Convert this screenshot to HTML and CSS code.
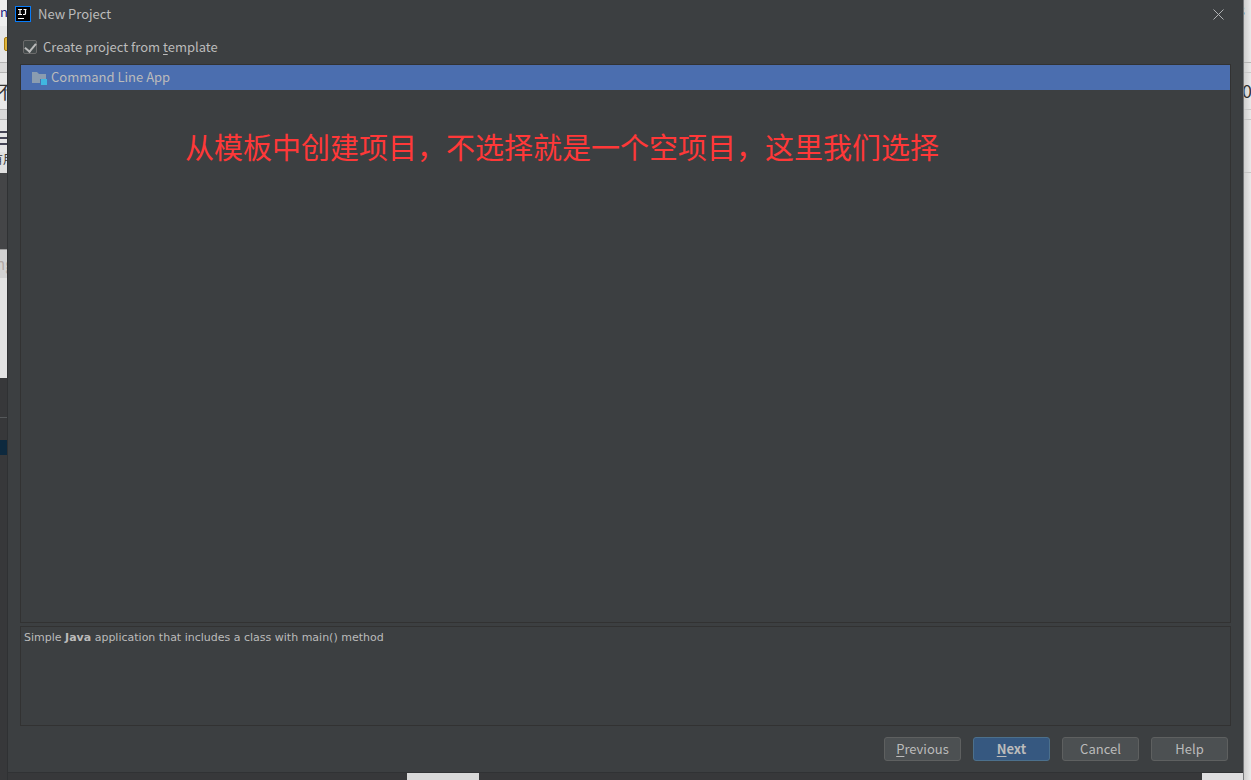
FILE: index.html
```html
<!DOCTYPE html>
<html lang="en">
<head>
  <meta charset="UTF-8">
  <meta name="viewport" content="width=device-width, initial-scale=1.0">
  <title>New Project</title>
  <link rel="stylesheet" href="styles.css">
</head>
<body>

  <div class="edge edge-left">
    <div class="tab-cell">n</div>
    <div class="folder-cell"><span class="folder"></span></div>
    <div class="divider"></div>
    <div class="text-cell">不</div>
    <div class="divider"></div>
    <div class="menu-cell">
      <span class="line"></span>
      <span class="line"></span>
      <span class="line"></span>
    </div>
    <div class="caption-cell">有用</div>
    <div class="dark-cell"></div>
    <div class="faded-cell">ng</div>
    <div class="page-cell"></div>
    <div class="editor-cell">
      <div class="editor-line"></div>
      <div class="editor-selection"></div>
    </div>
  </div>

  <main class="dialog">
    <header class="titlebar">
      <svg class="logo" viewBox="0 0 16 16" width="16" height="16">
        <rect width="16" height="16" fill="#087cfa"/>
        <rect x="1" y="1" width="14" height="14" fill="#000"/>
        <path d="M3 3.500h4M5 3.500v5M3 8.500h4M8.500 3.500h3M10.500 3v4.500q0 1-1 1H8" fill="none" stroke="#fff" stroke-width="1.200"/>
        <path d="M3 12.500h6" stroke="#fff"/>
      </svg>
      <h1>New Project</h1>
      <button class="close" type="button" aria-label="Close">
        <svg viewBox="0 0 11 11" width="11" height="11">
          <path d="M.5.5l10 10M10.500.5l-10 10" stroke="#afb1b3" fill="none"/>
        </svg>
      </button>
    </header>

    <label class="option">
      <input type="checkbox" checked>
      <span>Create project from <u>t</u>emplate</span>
    </label>

    <div class="panels">
      <section class="templates">
        <button class="template" type="button">
          <svg viewBox="0 0 16 16" width="16" height="16">
            <path d="M1 2h5l2 2h7v5H9v4H1z" fill="#8a9cb0"/>
            <rect x="10" y="9" width="6" height="6" fill="#40b6e0"/>
          </svg>
          <span>Command Line App</span>
        </button>
        <p class="note">从模板中创建项目，不选择就是一个空项目，这里我们选择</p>
      </section>
      <section class="description">
        Simple <b>Java</b> application that includes a class with main() method
      </section>
    </div>

    <footer class="actions">
      <button type="button"><u>P</u>revious</button>
      <button class="primary" type="button"><u>N</u>ext</button>
      <button type="button">Cancel</button>
      <button type="button">Help</button>
    </footer>
  </main>

  <div class="edge edge-right">
    <div class="tab-cell">8</div>
    <div class="field-cell">0</div>
    <div class="toolbar-cell"></div>
    <div class="page-cell"></div>
  </div>

  <div class="edge-bottom">
    <span class="sheet"></span>
    <span class="sheet sheet-end"></span>
  </div>

</body>
</html>
```

FILE: styles.css
```css
* {
  box-sizing: border-box;
}

body {
  margin: 0;
  height: 100vh;
  display: grid;
  grid-template-columns: 8px 1fr 8px;
  grid-template-rows: 1fr 8px;
  background-color: #37383A;
  color: #BBBBBB;
  font-family: 'Noto Sans CJK SC', 'Noto Sans', sans-serif;
  font-size: 13px;
  overflow: hidden;
}

/* Windows showing behind the dialog */
.edge {
  display: flex;
  flex-direction: column;
  overflow: hidden;
  white-space: nowrap;
  color: #333333;
}

.edge-left {
  grid-row: 1 / 3;
  border-right: 1px solid #2F3133;
}

.edge-right {
  grid-column: 3;
  grid-row: 1 / 3;
  border-left: 1px solid #77797B;
  background: linear-gradient(to right, #CFCFCF, #EAEAEA);
}

.tab-cell {
  height: 26px;
  line-height: 24px;
  background-color: #EEEEEE;
  color: #1A1A80;
}

.folder-cell {
  height: 36px;
  padding: 11px 0 0 4px;
  background-color: #E6E6E6;
}

.folder {
  display: block;
  width: 14px;
  height: 14px;
  border: 1px solid #A87C10;
  border-radius: 2px;
  background-color: #E0B53C;
}

.divider {
  height: 11px;
  border: solid #B4B4B4;
  border-width: 1px 0;
  background-color: #DADADA;
}

.text-cell {
  height: 36px;
  line-height: 36px;
  font-size: 18px;
  text-indent: -4px;
  background-color: #E8E8E8;
}

.menu-cell {
  height: 32px;
  padding-top: 11px;
  display: flex;
  flex-direction: column;
  gap: 4px;
  background-color: #E6E6E6;
}

.line {
  height: 2px;
  background-color: #444455;
}

.caption-cell {
  height: 21px;
  line-height: 14px;
  font-size: 12px;
  text-indent: -9px;
  background-color: #E0E0E0;
}

.dark-cell {
  height: 76px;
  background-color: #444547;
}

.faded-cell {
  height: 29px;
  line-height: 28px;
  font-size: 15px;
  text-indent: -4px;
  border-top: 1px solid #A0A0A0;
  background-color: #D2D2D2;
  color: #B0A8A4;
}

.edge-left .page-cell {
  height: 100px;
  background-color: #E3E3E3;
}

.editor-cell {
  flex: 1;
  background-color: #37383A;
}

.editor-line {
  height: 40px;
  border-bottom: 1px solid #55585A;
}

.editor-selection {
  height: 15px;
  margin-top: 22px;
  background-color: #0D293E;
}

.edge-right .tab-cell {
  height: 63px;
  line-height: 20px;
  font-size: 14px;
  text-indent: -7px;
  border-bottom: 1px solid #B4B4B4;
  background: none;
  color: #222222;
}

.field-cell {
  height: 38px;
  margin: 9px 0;
  line-height: 34px;
  font-size: 18px;
  text-indent: -2px;
  border: solid #C8C8C8;
  border-width: 1px 0;
}

.toolbar-cell {
  height: 54px;
  border: solid #C4C4C4;
  border-width: 1px 0;
}

.edge-right .page-cell {
  flex: 1;
}

.edge-bottom {
  grid-column: 2;
  grid-row: 2;
  display: flex;
  border-top: 1px solid #303234;
}

.sheet {
  width: 72px;
  margin-left: 399px;
  background-color: #D9D9D9;
}

.sheet-end {
  width: 41px;
  margin-left: auto;
  background-color: #DEDEDF;
}

/* Dialog */
.dialog {
  grid-column: 2;
  grid-row: 1;
  display: flex;
  flex-direction: column;
  min-height: 0;
  padding: 0 12px 11px;
  background-color: #3C3F41;
}

.titlebar {
  display: flex;
  align-items: center;
  height: 28px;
  margin-left: -5px;
}

.titlebar h1 {
  margin: 0 0 0 7px;
  padding-bottom: 2px;
  font-size: 13px;
  font-weight: 400;
}

.close {
  display: flex;
  margin-left: auto;
  padding: 6px 7px;
  border: none;
  background: none;
}

.option {
  display: flex;
  align-items: center;
  gap: 6px;
  height: 36px;
  padding: 2px 0 0 3px;
}

.option span,
.template span {
  padding-bottom: 2px;
}

.option input {
  appearance: none;
  width: 14px;
  height: 14px;
  margin: 0;
  border: 1px solid #6B6B6B;
  border-radius: 2px;
  background-color: #43494A;
  display: grid;
  place-items: center;
}

.option input:checked::before {
  content: '';
  width: 5px;
  height: 9px;
  margin-bottom: 3px;
  border: solid #BBBBBB;
  border-width: 0 2px 2px 0;
  transform: rotate(40deg);
}

u {
  text-underline-offset: 2px;
}

.panels {
  flex: 1;
  display: flex;
  flex-direction: column;
  gap: 3px;
}

.templates {
  flex: 1;
  border: 1px solid #323232;
}

.template {
  display: flex;
  align-items: center;
  gap: 4px;
  width: 100%;
  height: 25px;
  padding: 0 10px;
  border: none;
  background-color: #4B6EAF;
  color: #BBBBBB;
  font: inherit;
}

.note {
  margin: 36px 0 0 164px;
  font-size: 29px;
  line-height: 40px;
  color: #FF3838;
}

.description {
  height: 100px;
  padding: 3px;
  border: 1px solid #323232;
  font-family: 'DejaVu Sans', Verdana, sans-serif;
  font-size: 11px;
  line-height: 15px;
}

.actions {
  display: flex;
  justify-content: flex-end;
  gap: 12px;
  padding: 11px 3px 0 0;
}

.actions button {
  width: 77px;
  height: 24px;
  padding: 0 0 2px;
  border: 1px solid #5E6060;
  border-radius: 3px;
  background-color: #4C5052;
  color: #BBBBBB;
  font: inherit;
}

.actions .primary {
  border-color: #4C708C;
  background-color: #365880;
  font-weight: 700;
}
```
